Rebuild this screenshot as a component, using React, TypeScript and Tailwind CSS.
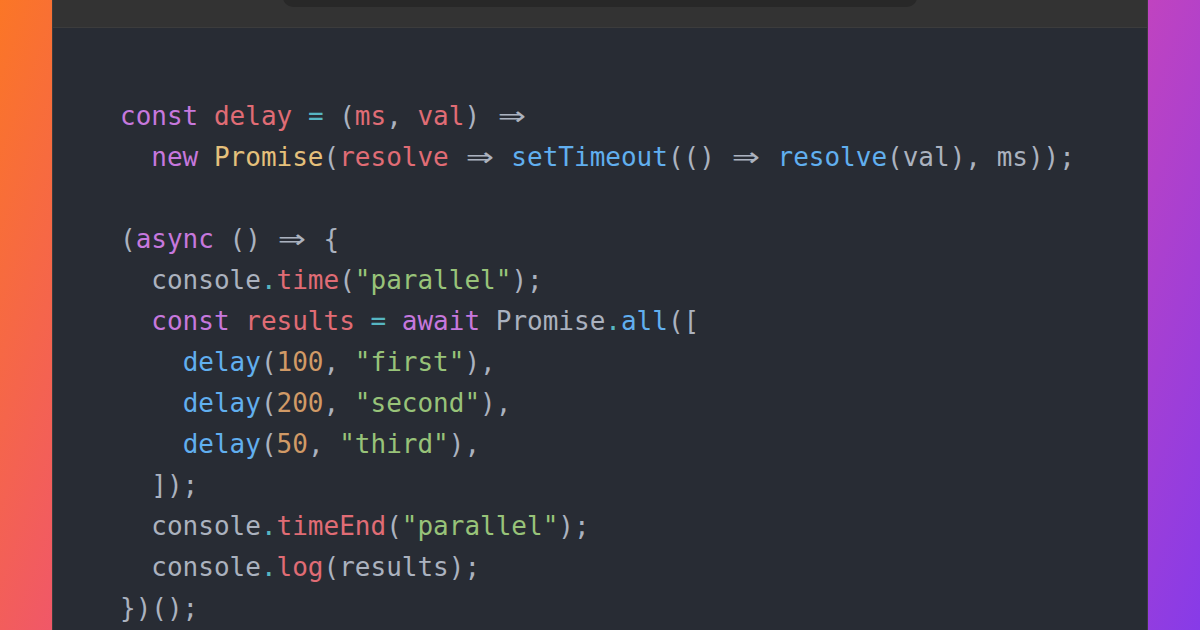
import React from "react";

type Tok = [string, string];

const P = "text-[#c678dd]"; // purple keyword
const R = "text-[#e06c75]"; // red
const C = "text-[#56b6c2]"; // cyan
const G = "text-[#abb2bf]"; // grey
const Y = "text-[#e5c07b]"; // yellow
const B = "text-[#61afef]"; // blue
const S = "text-[#98c379]"; // string
const N = "text-[#d19a66]"; // number
const A = "arrow";

const lines: Tok[][] = [
  [[P, "const"], [G, " "], [R, "delay"], [G, " "], [C, "="], [G, " ("], [R, "ms"], [G, ", "], [R, "val"], [G, ") "], [A, "=>"]],
  [[G, "  "], [P, "new"], [G, " "], [Y, "Promise"], [G, "("], [R, "resolve"], [G, " "], [A, "=>"], [G, " "], [B, "setTimeout"], [G, "(() "], [A, "=>"], [G, " "], [B, "resolve"], [G, "(val), ms));"]],
  [],
  [[G, "("], [P, "async"], [G, " () "], [A, "=>"], [G, " {"]],
  [[G, "  console"], [C, "."], [R, "time"], [G, "("], [S, "\"parallel\""], [G, ");"]],
  [[G, "  "], [P, "const"], [G, " "], [R, "results"], [G, " "], [C, "="], [G, " "], [P, "await"], [G, " Promise"], [C, "."], [B, "all"], [G, "(["]],
  [[G, "    "], [B, "delay"], [G, "("], [N, "100"], [G, ", "], [S, "\"first\""], [G, "),"]],
  [[G, "    "], [B, "delay"], [G, "("], [N, "200"], [G, ", "], [S, "\"second\""], [G, "),"]],
  [[G, "    "], [B, "delay"], [G, "("], [N, "50"], [G, ", "], [S, "\"third\""], [G, "),"]],
  [[G, "  ]);"]],
  [[G, "  console"], [C, "."], [R, "timeEnd"], [G, "("], [S, "\"parallel\""], [G, ");"]],
  [[G, "  console"], [C, "."], [R, "log"], [G, "(results);"]],
  [[G, "})();"]],
];

export default function App() {
  return (
    <div className="w-[1200px] h-[630px] overflow-hidden bg-[linear-gradient(110deg,#fb7626_0%,#ef5470_22%,#c744bb_78%,#873be8_100%)] px-[52px]">
      <div className="-mt-[30px] h-[700px] border-x border-[#3d3d3d] bg-[#282c34]">
        <div className="h-[58px] bg-[#333333] border-b border-[#3c3c3c] flex justify-center">
          <div className="w-[634px] h-[30px] mt-[7px] rounded-[10px] bg-[#282828]" />
        </div>
        <div
          className="pt-[68px] pl-[67px] text-[26px] leading-[41px] whitespace-pre"
          style={{ fontFamily: '"DejaVu Sans Mono", "Liberation Mono", monospace' }}
        >
          {lines.map((l, i) => (
            <div key={i} className="h-[41px]">
              {l.map(([cls, t], j) =>
                cls === A ? (
                  <span key={j} className="inline-block w-[2ch] text-center text-[#abb2bf]">
                    <span
                      className="inline-block scale-x-[1.3]"
                      style={{ fontFamily: '"DejaVu Sans", sans-serif' }}
                    >
                      ⇒
                    </span>
                  </span>
                ) : (
                  <span key={j} className={cls}>
                    {t}
                  </span>
                )
              )}
            </div>
          ))}
        </div>
      </div>
    </div>
  );
}
